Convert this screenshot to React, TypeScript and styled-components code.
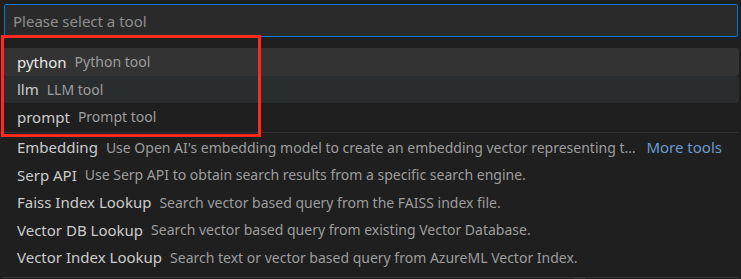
import React from "react";
import styled, { createGlobalStyle } from "styled-components";

const GlobalStyle = createGlobalStyle`
  html, body {
    margin: 0;
    padding: 0;
    background: #1f1f1f;
  }
  body {
    font-family: "Noto Sans", "Open Sans", sans-serif;
    font-size: 15px;
    color: #cccccc;
  }
`;

const Container = styled.div`
  width: 741px;
  height: 279px;
  box-sizing: border-box;
  padding: 4px 2px 0 3px;
  background: #1f1f1f;
  overflow: hidden;
  position: relative;
`;

const InputBox = styled.div`
  margin: 0 1px 0 1px;
  height: 33px;
  box-sizing: border-box;
  border: 1px solid #0078d4;
  border-radius: 2px;
  background: #2a2a2a;
  display: flex;
  align-items: center;
  padding: 0 8px;
  font-size: 15px;
  color: #8f8f8f;
`;

const List = styled.ul`
  list-style: none;
  margin: 0;
  padding: 11px 0 0;
`;

const Row = styled.li<{ $bg?: string }>`
  height: 27.5px;
  display: flex;
  align-items: center;
  padding: 0 17px 0 14px;
  border-radius: 3px;
  background: ${(p) => p.$bg || "transparent"};
  white-space: nowrap;
`;

const Label = styled.span<{ $bright?: boolean }>`
  color: ${(p) => (p.$bright ? "#e8e8e8" : "#cccccc")};
  margin-right: 8px;
  flex-shrink: 0;
`;

const Desc = styled.span`
  color: #9d9d9d;
  font-size: 14px;
  overflow: hidden;
  text-overflow: ellipsis;
  flex: 0 1 auto;
  min-width: 0;
`;

const MoreLink = styled.span`
  margin-left: auto;
  padding-left: 6px;
  color: #6b9bd0;
  flex-shrink: 0;
`;

const Separator = styled.li`
  height: 1px;
  margin: 1px 1px 1px;
  background: #333333;
`;

const BottomEdge = styled.div`
  margin-top: 6px;
  height: 1px;
  background: #333333;
  position: relative;
`;

const ScrollThumb = styled.div`
  position: absolute;
  left: 570px;
  top: 1px;
  width: 12px;
  height: 4px;
  background: #2c2c2c;
`;

const Highlight = styled.div`
  position: absolute;
  left: 1px;
  top: 35px;
  width: 254px;
  height: 96px;
  border: 3px solid #ff2a1f;
  pointer-events: none;
`;

const topTools = [
  { name: "python", desc: "Python tool", bg: "#333333", bright: true },
  { name: "llm", desc: "LLM tool", bg: "#2a2d2e" },
  { name: "prompt", desc: "Prompt tool" },
];

const moreTools = [
  {
    name: "Embedding",
    desc: "Use Open AI's embedding model to create an embedding vector representing t…",
    more: true,
  },
  { name: "Serp API", desc: "Use Serp API to obtain search results from a specific search engine." },
  { name: "Faiss Index Lookup", desc: "Search vector based query from the FAISS index file." },
  { name: "Vector DB Lookup", desc: "Search vector based query from existing Vector Database." },
  { name: "Vector Index Lookup", desc: "Search text or vector based query from AzureML Vector Index." },
];

const App: React.FC = () => {
  return (
    <>
      <GlobalStyle />
      <Container>
        <InputBox>Please select a tool</InputBox>
        <List>
          {topTools.map((t) => (
            <Row key={t.name} $bg={t.bg}>
              <Label $bright={t.bright}>{t.name}</Label>
              <Desc>{t.desc}</Desc>
            </Row>
          ))}
          <Separator />
          {moreTools.map((t) => (
            <Row key={t.name}>
              <Label>{t.name}</Label>
              <Desc>{t.desc}</Desc>
              {t.more && <MoreLink>More tools</MoreLink>}
            </Row>
          ))}
        </List>
        <BottomEdge>
          <ScrollThumb />
        </BottomEdge>
        <Highlight />
      </Container>
    </>
  );
};

export default App;
